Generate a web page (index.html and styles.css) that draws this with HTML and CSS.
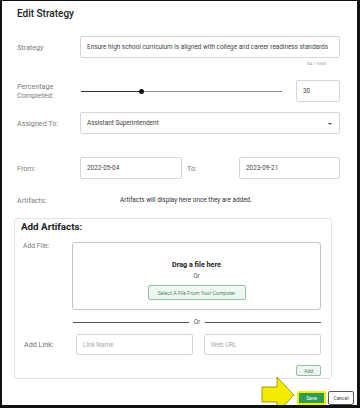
FILE: index.html
```html
<!DOCTYPE html>
<html>
<head>
<meta charset="utf-8">
<link rel="stylesheet" href="styles.css">
</head>
<body>
<div class="frame">
  <div class="dialog">
    <h1 class="title">Edit Strategy</h1>

    <div class="row">
      <div class="lbl">Strategy</div>
      <div class="input wide">Ensure high school curriculum is aligned with college and career readiness standards</div>
    </div>
    <div class="counter">84 / 1000</div>

    <div class="row pct-row">
      <div class="lbl">Percentage<br>Completed:</div>
      <div class="slider">
        <div class="track-active" style="width:30%"></div>
        <div class="thumb" style="left:30%"></div>
      </div>
      <div class="input num">30</div>
    </div>

    <div class="row assign-row">
      <div class="lbl">Assigned To:</div>
      <div class="input wide select">Assistant Superintendent<span class="caret"></span></div>
    </div>

    <div class="row date-row">
      <div class="lbl">From:</div>
      <div class="input date-from">2022-05-04</div>
      <div class="lbl to-lbl">To:</div>
      <div class="input date-to">2023-09-21</div>
    </div>

    <div class="row art-row">
      <div class="lbl">Artifacts:</div>
      <div class="art-msg">Artifacts will display here once they are added.</div>
    </div>

    <div class="card">
      <h2 class="card-title">Add Artifacts:</h2>
      <div class="file-row">
        <div class="sub-lbl">Add File:</div>
        <div class="drop">
          <div class="drag">Drag a file here</div>
          <div class="drop-or">Or</div>
          <div class="btn-green select-btn">Select A File From Your Computer</div>
        </div>
      </div>
      <div class="sep"><span class="sep-line"></span><span class="sep-or">Or</span><span class="sep-line"></span></div>
      <div class="link-row">
        <div class="sub-lbl link-lbl">Add Link:</div>
        <div class="input link-name ph">Link Name</div>
        <div class="input link-url ph">Web URL</div>
      </div>
      <div class="add-row"><div class="btn-green add-btn">Add</div></div>
    </div>

    <div class="footer">
      <div class="save-wrap"><div class="save">Save</div></div>
      <div class="cancel">Cancel</div>
    </div>
  </div>
  <svg class="arrow" width="40" height="40" viewBox="0 0 40 40">
    <polygon points="4,11 19,11 19,1 36,19 19,37 19,26 4,26" fill="#f3ec00" stroke="#8a8400" stroke-width="0.8"/>
  </svg>
</div>
</body>
</html>
```
FILE: styles.css
```css
* { box-sizing: border-box; }
html, body { margin: 0; padding: 0; background: #fff; }
body { font-family: Roboto, "Liberation Sans", sans-serif; }

.frame {
  position: relative;
  width: 360px;
  height: 408px;
  border-style: solid;
  border-color: #111;
  border-width: 1px 3px 3px 2px;
  overflow: hidden;
  background: #fff;
}

.dialog {
  padding: 6px 17px 0 15px;
}

.title {
  margin: 0;
  font-size: 10px;
  line-height: 14px;
  font-weight: 500;
  color: #222;
}

.row {
  display: flex;
  align-items: center;
}
.title + .row { margin-top: 15px; }

.lbl {
  width: 63px;
  flex: none;
  font-size: 7.2px;
  line-height: 9px;
  color: #7a7a7a;
}

.input {
  height: 22px;
  border: 1px solid #d6d6d6;
  border-radius: 2px;
  background: #fff;
  font-size: 6.4px;
  color: #444;
  display: flex;
  align-items: center;
  padding-left: 6px;
  white-space: nowrap;
  overflow: hidden;
}
.wide { flex: 1; }

.counter {
  margin-top: 2px;
  text-align: right;
  padding-right: 14px;
  font-size: 4.4px;
  line-height: 7px;
  color: #999;
}

.pct-row { margin-top: 13px; }
.slider {
  position: relative;
  width: 201px;
  height: 1px;
  margin-left: 1px;
  background: #8a8a8a;
}
.track-active {
  position: absolute;
  left: 0; top: 0;
  height: 1px;
  background: #333;
}
.thumb {
  position: absolute;
  top: -2px;
  width: 5px;
  height: 5px;
  margin-left: -2.5px;
  border-radius: 50%;
  background: #111;
}
.num {
  width: 44px;
  margin-left: auto;
}

.assign-row { margin-top: 10px; }
.select { position: relative; }
.caret {
  position: absolute;
  right: 7px;
  top: 10px;
  width: 0; height: 0;
  border-left: 2px solid transparent;
  border-right: 2px solid transparent;
  border-top: 2.5px solid #555;
}

.date-row { margin-top: 23px; }
.date-from { width: 102px; }
.to-lbl { width: 52px; margin-left: 5px; }
.date-to { flex: 1; }

.art-row { margin-top: 16px; height: 10px; }
.art-msg {
  margin-left: 40px;
  font-size: 6.4px;
  color: #333;
  white-space: nowrap;
}

.card {
  margin: 13px 8px 0 -3px;
  height: 161px;
  border: 1px solid #e2e2e2;
  border-radius: 3px;
  padding: 2px 10px 0 6px;
}
.card-title {
  margin: 0;
  font-size: 9.8px;
  line-height: 12px;
  font-weight: 700;
  color: #222;
}

.file-row {
  display: flex;
  margin-top: 9px;
}
.sub-lbl {
  width: 51px;
  flex: none;
  padding-left: 2px;
  font-size: 6.8px;
  line-height: 8px;
  color: #777;
}
.drop {
  flex: 1;
  height: 68px;
  border: 1px solid #c4c4c4;
  border-radius: 3px;
  display: flex;
  flex-direction: column;
  align-items: center;
  padding-top: 17px;
}
.drag {
  font-size: 7.2px;
  line-height: 9px;
  font-weight: 700;
  color: #222;
}
.drop-or {
  margin-top: 3px;
  font-size: 6.4px;
  line-height: 8px;
  color: #555;
}
.btn-green {
  border: 1px solid #93c0a2;
  border-radius: 2px;
  background: #eef7f1;
  color: #4e8c63;
  font-size: 5.2px;
  display: flex;
  align-items: center;
  justify-content: center;
}
.select-btn {
  margin-top: 5px;
  width: 98px;
  height: 15px;
}

.sep {
  display: flex;
  align-items: center;
  margin: 7px 0 0 52px;
  height: 10px;
}
.sep-line {
  flex: 1;
  height: 1px;
  background: #555;
}
.sep-or {
  padding: 0 5px;
  font-size: 6.4px;
  color: #555;
}

.link-row {
  display: flex;
  align-items: center;
  margin-top: 7px;
}
.link-lbl { width: 55px; padding-left: 3px; font-size: 7.2px; color: #707070; }
.link-name { width: 117px; height: 21px; }
.link-url { flex: 1; height: 21px; margin-left: 11px; }
.ph { color: #aaa; }

.add-row {
  display: flex;
  justify-content: flex-end;
  margin-top: 10px;
}
.add-btn {
  width: 25px;
  height: 11px;
}

.footer {
  display: flex;
  justify-content: flex-end;
  align-items: center;
  gap: 2px;
  margin-top: 12px;
  margin-right: -14px;
}
.save-wrap {
  border: 2px solid #eef000;
  border-radius: 2px;
}
.save {
  width: 25px;
  height: 10px;
  background: #2f9a55;
  color: #fff;
  font-size: 5px;
  display: flex;
  align-items: center;
  justify-content: center;
}
.cancel {
  width: 26px;
  height: 14px;
  border: 1px solid #555;
  border-radius: 2px;
  color: #444;
  font-size: 5px;
  display: flex;
  align-items: center;
  justify-content: center;
}

.arrow {
  position: absolute;
  left: 256px;
  top: 375px;
}
```
